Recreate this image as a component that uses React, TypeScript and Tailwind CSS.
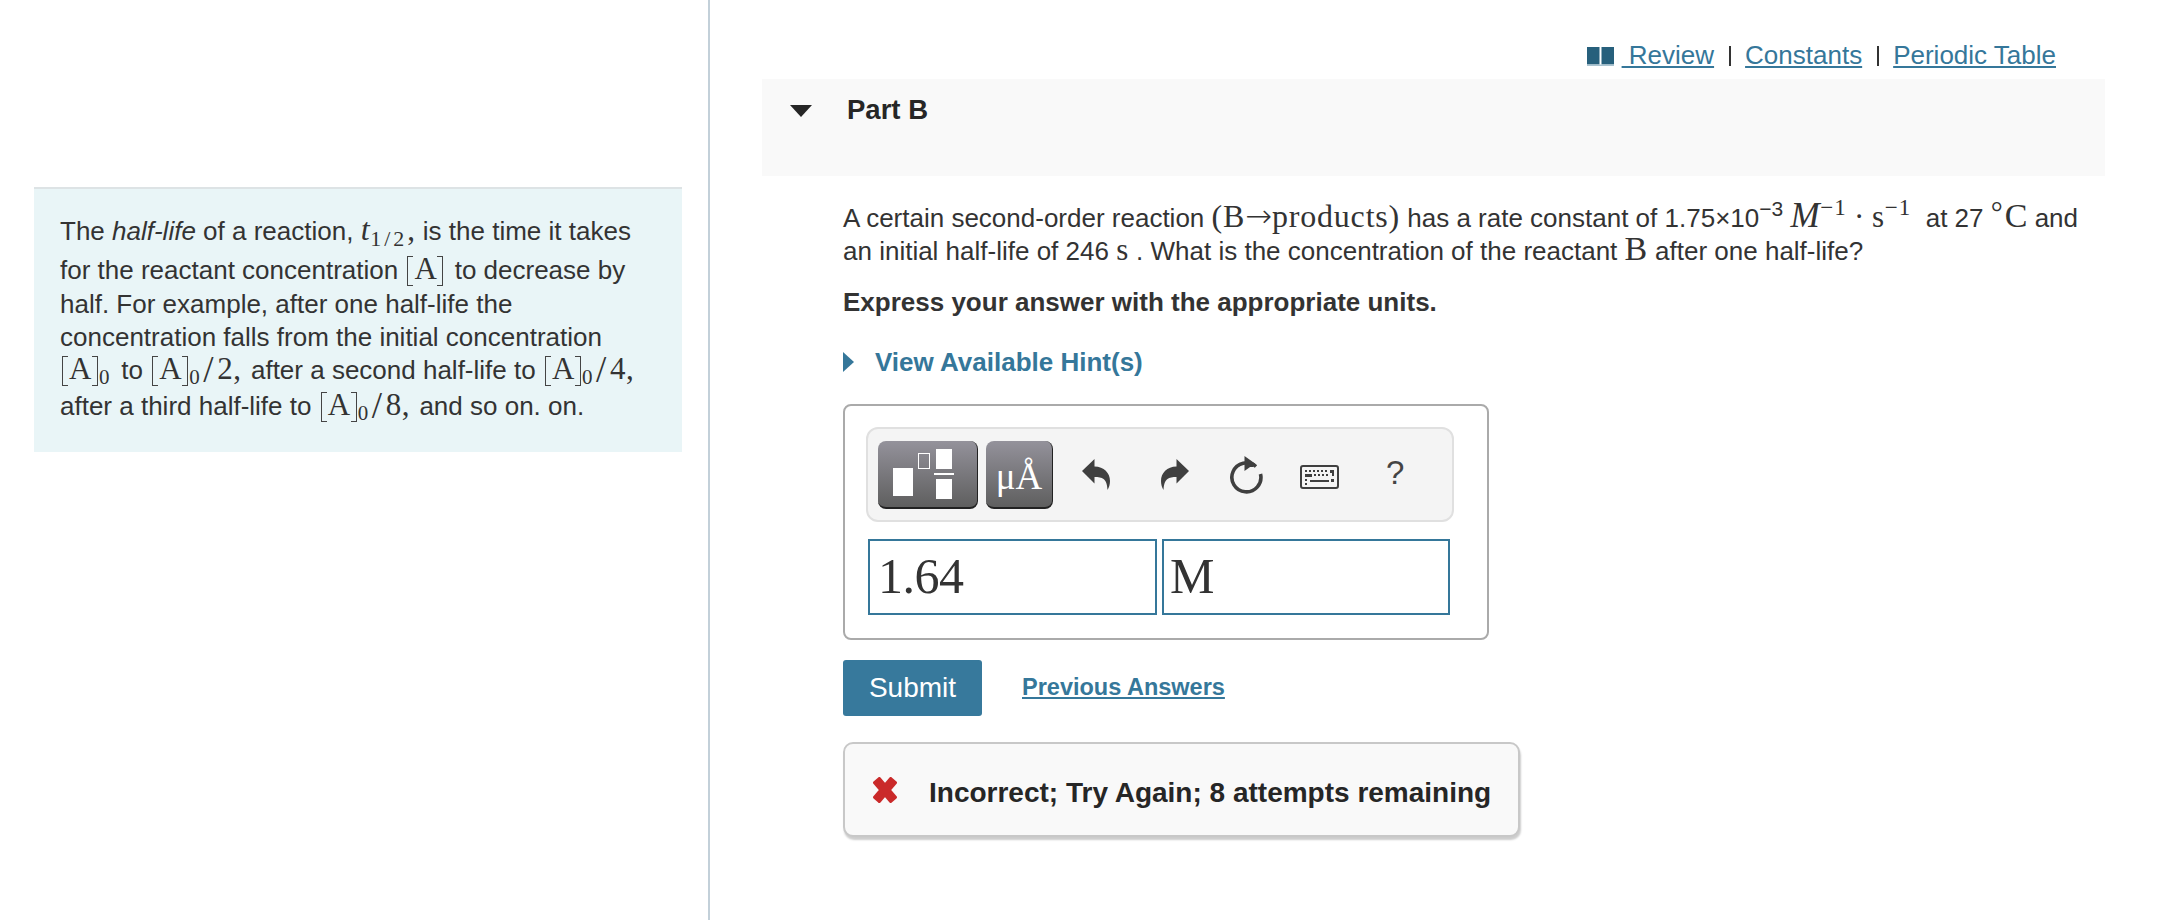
import React from 'react';

const sans = "font-['Liberation_Sans',Arial,sans-serif]";

const M: React.FC<{ children: React.ReactNode; className?: string }> = ({ children, className = '' }) => (
  <span className={`font-['Liberation_Serif',serif] text-[31px] leading-[0] tracking-[0.6px] ${className}`}>{children}</span>
);

// thin tall square brackets like the math renderer draws them
const Bracket = ({ right }: { right?: boolean }) => (
  <span
    className={`inline-block h-[30px] w-[6px] align-[-7px] border-y border-[#444] ${
      right ? 'border-r mr-[2px]' : 'border-l ml-[2px] mr-[1px]'
    }`}
  />
);

const Conc: React.FC<{ sub?: boolean }> = ({ sub }) => (
  <M>
    <Bracket />A<Bracket right />
    {sub && <span className="text-[21px] align-[-5px] leading-[0] ml-[-1px]">0</span>}
  </M>
);

const Slash: React.FC<{ n: string }> = ({ n }) => (
  <M className="mr-[2px]">
    <span className="text-[37px] font-light leading-[0] align-[-3px] mx-[3px]">/</span>
    {n},
  </M>
);

const Sup: React.FC<{ children: React.ReactNode }> = ({ children }) => (
  <span className="font-['Liberation_Serif',serif] text-[23px] tracking-[1px] align-[12px] leading-[0]">{children}</span>
);

const Book = () => (
  <svg width="27" height="20" viewBox="0 0 27 20" className="inline-block">
    <path d="M0 1h12.500v17.500H0zM14.500 1H27v17.500H14.500z" fill="#27607c" />
    <path d="M0 18.500h27V20H0z" fill="#a9c3d0" />
  </svg>
);

const Undo = ({ flip }: { flip?: boolean }) => (
  <svg width="28" height="31" viewBox="0 0 28 31" className={flip ? '-scale-x-100' : ''}>
    <path
      d="M0 12 12.500 0v7.500C22 7.500 28 14 28 22c0 3.500-1 6.500-2.500 9-.3-6-1.500-9-4-11-2-1.500-5-2-9-2v6.500z"
      fill="#3f3f3f"
    />
  </svg>
);

const Reset = () => (
  <svg width="34" height="38" viewBox="0 0 34 38">
    <path d="M26 10.500A14.500 14.500 0 1 0 30.500 18" fill="none" stroke="#3f3f3f" strokeWidth="3.600" />
    <path d="M14.500 0 25 7.500 14.500 15z" fill="#3f3f3f" />
    <path d="M17 7.500h6v3.500h-6z" fill="#3f3f3f" />
  </svg>
);

const Keyboard = () => (
  <svg width="39" height="24" viewBox="0 0 39 24">
    <rect x="1" y="1" width="37" height="22" rx="2" fill="#f4f4f4" stroke="#3f3f3f" strokeWidth="2" />
    <path
      d="M5 5h2v2H5zM9 5h2v2H9zM13 5h2v2h-2zM17 5h2v2h-2zM21 5h2v2h-2zM25 5h2v2h-2zM30 5h4v6h-2V8h-2zM5 9h7v3H5zM14 9h2v2h-2zM18 9h2v2h-2zM22 9h2v2h-2zM26 9h2v2h-2zM5 14h2v2H5zM10 15h19v2H10zM31 14h3v3h-3zM5 18h2v2H5z"
      fill="#3f3f3f"
    />
  </svg>
);

const Cross = () => (
  <svg width="28" height="26" viewBox="2 0.500 24 25">
    <path
      d="M4 6 8.500 2 14 8.500 19.500 2 24 6 18 13 24 20 19.500 24 14 17.500 8.500 24 4 20 10 13z"
      fill="#ca2a2a"
      stroke="#ca2a2a"
      strokeWidth="3"
      strokeLinejoin="round"
    />
  </svg>
);

const App: React.FC = () => {
  return (
    <div className={`${sans} flex h-[920px] w-[2184px] bg-white text-[#333] text-[26px]`}>
      {/* Left intro panel */}
      <div className="h-full w-[710px] shrink-0 border-r-2 border-[#c3d0d9] pt-[187px] pl-[34px] pr-[26px]">
        <div className="h-[265px] border-t-2 border-[#dde3e5] bg-[#e9f5f7] pl-[26px] pt-[23px] whitespace-nowrap">
          <div className="flex h-[38px] items-center">
            <span className="whitespace-pre">
              The <i>half-life</i> of a reaction, <M className="italic text-[32px]">t</M>
              <span className="font-['Liberation_Serif',serif] text-[22px] tracking-[3px] align-[-6px] leading-[0]">1/2</span>
              <M>,</M> is the time it takes
            </span>
          </div>
          <div className="flex h-[38px] items-center pt-[2px]">
            <span className="whitespace-pre">
              for the reactant concentration <Conc /><span className="ml-[2px]"> to decrease by</span>
            </span>
          </div>
          <div className="flex h-[33px] items-center">half. For example, after one half-life the</div>
          <div className="flex h-[32px] items-center">concentration falls from the initial concentration</div>
          <div className="flex h-[35px] items-center">
            <span className="whitespace-pre">
              <Conc sub /><span className="ml-[4px]"> to </span><Conc sub /><Slash n="2" /> after a second half-life to <Conc sub /><Slash n="4" />
            </span>
          </div>
          <div className="flex h-[37px] items-center">
            <span className="whitespace-pre">
              after a third half-life to <Conc sub /><Slash n="8" /> and so on. on.
            </span>
          </div>
        </div>
      </div>

      {/* Right question panel */}
      <div className="flex-1 pl-[52px]">
        <div className="flex h-[79px] w-[1343px] items-start justify-end pr-[49px] pt-[36px]">
          <div className="flex items-center whitespace-pre text-[#35779a]">
            <Book />
            <span className="ml-[8px] underline"> Review</span>
            <span className="mx-[14.500px] h-[20px] w-[2px] bg-[#333]" />
            <span className="underline">Constants</span>
            <span className="mx-[14.500px] h-[20px] w-[2px] bg-[#333]" />
            <span className="underline">Periodic Table</span>
          </div>
        </div>

        <div className="flex h-[97px] w-[1343px] items-start bg-[#f9f9f9] pl-[28px] pt-[24px]">
          <svg width="22" height="12" viewBox="0 0 22 12" className="mt-[2px]">
            <path d="M0 0h22L11 12z" fill="#262626" />
          </svg>
          <div className="ml-[35px] mt-[-1px] text-[27.500px] leading-[16px] font-bold text-[#262626]">Part B</div>
        </div>

        <div className="pl-[81px]">
          <div className="mt-[26px] leading-[32px] whitespace-pre">
            <div>
              A certain second-order reaction <M className="text-[32px] tracking-[0.8px]">(B<span className="font-['DejaVu_Sans',sans-serif] font-extralight text-[32px] tracking-normal">→</span>products)</M> has a rate constant of 1.75×10<span className="text-[21px] align-[11px] leading-[0]">−3</span> <M className="italic text-[35px]">M</M><Sup>−1</Sup> <M>·</M> <M>s</M><Sup>−1</Sup>  at 27 <span className="font-['Liberation_Serif',serif] text-[30px] align-[5px] leading-[0] mr-[2px]">°</span><M className="text-[34px] tracking-[0px]">C</M> and
            </div>
            <div className="mt-[1px]">
              an initial half-life of 246 <M>s</M> . What is the concentration of the reactant <M className="text-[34px]">B</M> after one half-life?
            </div>
          </div>

          <div className="mt-[19px] font-bold leading-[32px]">Express your answer with the appropriate units.</div>

          <div className="mt-[28px] flex h-[32px] items-center font-bold text-[#35779a]">
            <svg width="11" height="20" viewBox="0 0 11 20">
              <path d="M0 0l11 10L0 20z" fill="#35779a" />
            </svg>
            <span className="ml-[21px]">View Available Hint(s)</span>
          </div>

          {/* Answer box */}
          <div className="mt-[26px] h-[236px] w-[646px] rounded-[8px] border-2 border-[#aaa] pl-[21px] pt-[21px]">
            <div className="flex h-[95px] w-[588px] items-center rounded-[12px] border-2 border-[#e0e0e0] bg-[#f4f4f4] pl-[10px]">
              <div className="relative h-[68px] w-[100px] rounded-[8px] border-b-2 border-r border-[#222] bg-gradient-to-b from-[#94929b] to-[#5f5f5f]">
                <div className="absolute left-[15px] top-[27px] h-[28px] w-[20px] bg-white" />
                <div className="absolute left-[40px] top-[12px] h-[16px] w-[12px] border border-white" />
                <div className="absolute left-[58px] top-[8px] h-[20px] w-[16px] bg-white" />
                <div className="absolute left-[56px] top-[32px] h-[2px] w-[20px] bg-white" />
                <div className="absolute left-[58px] top-[38px] h-[20px] w-[16px] bg-white" />
              </div>
              <div className="ml-[8px] flex h-[68px] w-[67px] items-center justify-center rounded-[8px] border-b-2 border-r border-[#222] bg-gradient-to-b from-[#94929b] to-[#5f5f5f] pt-[6px] font-['Liberation_Serif',serif] text-[37px] text-white">
                μÅ
              </div>
              <div className="ml-[29px] flex items-center">
                <Undo />
              </div>
              <div className="ml-[51px] flex items-center">
                <Undo flip />
              </div>
              <div className="ml-[41px] flex items-center">
                <Reset />
              </div>
              <div className="ml-[36px] flex items-center pt-[4px]">
                <Keyboard />
              </div>
              <div className="ml-[47px] pb-[4px] text-[33px] text-[#444]">?</div>
            </div>

            <div className="mt-[17px] ml-[2px] flex gap-[5px] font-['Liberation_Serif',serif] text-[50px] tracking-[-0.5px] leading-[70px]">
              <div className="h-[76px] w-[289px] border-2 border-[#35779a] pl-[8px]">1.64</div>
              <div className="h-[76px] w-[288px] border-2 border-[#35779a] pl-[6px]">M</div>
            </div>
          </div>

          {/* Submit row */}
          <div className="mt-[20px] flex items-center">
            <div className="flex h-[56px] w-[139px] items-center justify-center rounded-[3px] bg-[#37799c] text-[28px] text-white">
              Submit
            </div>
            <span className="ml-[40px] text-[23.500px] font-bold text-[#35779a] underline">Previous Answers</span>
          </div>

          {/* Feedback */}
          <div className="mt-[26px] flex h-[95px] w-[677px] items-center rounded-[10px] border-2 border-[#c8c8c8] bg-[#f9f9f9] pl-[26px] shadow-[1px_3px_2px_rgba(0,0,0,0.2)]">
            <Cross />
            <span className="ml-[30px] pt-[6px] text-[28px] font-bold text-[#262626] whitespace-nowrap">
              Incorrect; Try Again; 8 attempts remaining
            </span>
          </div>
        </div>
      </div>
    </div>
  );
};

export default App;
